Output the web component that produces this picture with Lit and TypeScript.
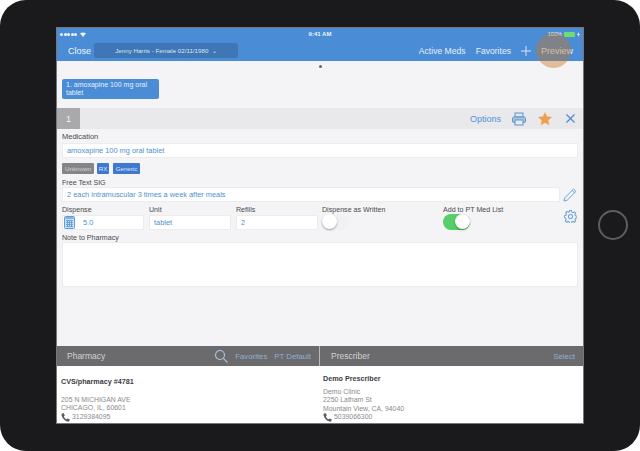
import { LitElement, html, css, svg } from "lit";
import { customElement } from "lit/decorators.js";

const phone = svg`<svg class="phone" viewBox="0 0 12 12" width="9" height="9"><path d="M1.500 .8 L3.800 .4 L5 3.400 L3.800 4.600 C4.600 6.400 5.800 7.800 7.600 8.400 L8.800 7.200 L11.600 8.400 L11.200 10.800 C10.800 11.600 9.600 11.800 8.600 11.400 C4.800 10.200 1.800 7 .8 3.200 C.6 2.200 .9 1.200 1.500 .8Z" fill="#5a5a5c"/></svg>`;

@customElement("app-root")
export class AppRoot extends LitElement {
  static styles = css`
    :host { display: block; width: 640px; height: 451px; background: #fff; overflow: hidden; font-family: "Liberation Sans", Arial, sans-serif; }
    .device { position: relative; box-sizing: border-box; width: 640px; height: 451px; background: #1a191b; border-radius: 26px; padding: 27px 56px; }
    .screen { position: relative; box-sizing: border-box; height: 397px; background: #f4f3f6; border: 1px solid #77777a; display: flex; flex-direction: column; overflow: hidden; }
    .home { position: absolute; left: 598px; top: 210px; width: 30px; height: 30px; box-sizing: border-box; border: 2px solid #5e5e60; border-radius: 50%; }
    .head { background: #4a8cd6; height: 33px; flex: none; color: #f1f6fc; }
    .status { height: 12px; display: grid; grid-template-columns: 1fr auto 1fr; align-items: center; padding: 0 3px; font-size: 5.6px; color: #eef4fb; }
    .status .time { font-size: 6px; font-weight: 700; }
    .dots { display: flex; align-items: center; gap: .6px; }
    .dots i { width: 3px; height: 3px; background: #f1f6fc; border-radius: 50%; }
    .dots svg { margin-left: 2px; }
    .batt { display: flex; align-items: center; justify-content: flex-end; gap: 2px; }
    .battbar { width: 11px; height: 5px; background: #6fdc70; border-radius: 1px; }
    .nav { height: 21px; display: flex; align-items: center; font-size: 9px; padding: 0 10px 0 11px; }
    .close { width: 26px; }
    .pt { width: 144px; height: 15px; background: #3f76b5; border-radius: 2px; display: flex; align-items: center; justify-content: center; font-size: 6.2px; color: #dbe6f3; }
    .navr { margin-left: auto; display: flex; align-items: center; gap: 10px; font-size: 8.6px; color: #e7eff9; }
    .plus { width: 10px; height: 10px; }
    .preview { font-size: 9px; }
    .touch { position: absolute; left: 479px; top: 5px; width: 35px; height: 35px; border-radius: 50%; background: rgba(197, 120, 35, .43); }
    .body { flex: 1; display: flex; flex-direction: column; }
    .pager { height: 18px; display: flex; justify-content: center; align-items: center; flex: none; }
    .pager i { width: 3px; height: 3px; background: #666; border-radius: 50%; margin-bottom: 8px; }
    .chipwrap { padding: 0 5px; height: 29px; flex: none; }
    .chip { width: 97px; height: 20px; box-sizing: border-box; background: #4a8cd6; border-radius: 2px; padding: 2px 4px; color: #e8f0fa; font-size: 7px; line-height: 8px; }
    .bar { height: 21px; flex: none; background: #e9e8eb; display: flex; align-items: center; padding-right: 8px; }
    .num { width: 23px; height: 21px; background: #a9a9ab; color: #f4f4f4; font-size: 9px; display: flex; align-items: center; justify-content: center; }
    .opts { margin-left: auto; display: flex; align-items: center; color: #4d94d8; font-size: 9px; }
    .opts svg { display: block; }
    .form { padding: 0 5px; display: flex; flex-direction: column; flex: none; }
    .lbl { font-size: 7.1px; color: #4a4a4c; line-height: 8px; white-space: nowrap; }
    .in { box-sizing: border-box; height: 15px; background: #fff; border: 1px solid #ececee; display: flex; align-items: center; padding-left: 4px; color: #4f8fd0; font-size: 7.4px; }
    .badges { display: flex; gap: 3px; margin: 5px 0; }
    .b { height: 11px; border-radius: 1px; display: flex; align-items: center; justify-content: center; color: #dfe8f4; font-size: 6.2px; background: #3f78d0; }
    .b.g { background: #858587; color: #d7d7d7; width: 32px; }
    .b.rx { width: 12px; }
    .b.gen { width: 27px; margin-left: 1px; }
    .sigrow { display: flex; align-items: center; gap: 3px; }
    .sigrow .in { flex: 1; }
    .sigrow svg { margin-right: 1px; }
    .grid { display: grid; grid-template-columns: 87px 87px 86px 121px 121px 1fr; margin-top: 4px; align-items: start; }
    .cell { display: flex; flex-direction: column; }
    .cell .in { width: 82px; margin-top: 1px; }
    .calc { display: flex; align-items: center; width: 82px; height: 15px; margin-top: 1px; background: #fff; border: 1px solid #ececee; box-sizing: border-box; color: #4f8fd0; font-size: 7.4px; }
    .calc svg { margin: 0 8px 0 1px; }
    .sw { width: 27px; height: 16px; border-radius: 8px; background: #f1f0f3; position: relative; }
    .sw::after { content: ""; position: absolute; left: 0; top: 0; width: 15px; height: 15px; background: #fff; border-radius: 50%; box-shadow: 0 1px 2px rgba(0,0,0,.35); }
    .sw.on { background: #55cf68; }
    .sw.on::after { left: 12px; }
    .note { height: 45px; background: #fff; border: 1px solid #ececee; box-sizing: border-box; }
    .gear { justify-self: end; margin: 4px 2px 0 0; }
    .foot { margin-top: auto; flex: none; display: grid; grid-template-columns: 262px 1fr; }
    .fh { height: 20px; background: #6b6a6c; display: flex; align-items: center; padding: 0 8px 0 10px; color: #d3d3d5; font-size: 8.5px; }
    .fh.r { border-left: 1px solid #b9b9bb; padding-left: 11px; }
    .fh .sp { margin-left: auto; display: flex; align-items: center; gap: 7px; color: #8fb1d4; font-size: 7.8px; }
    .fb { background: #fff; height: 57px; box-sizing: border-box; font-size: 6.9px; line-height: 8.2px; color: #8a8a8c; }
    .fb.l { padding: 12px 0 0 4px; }
    .fb.rr { padding: 9px 0 0 4px; }
    .fb b { display: block; color: #3c3c3e; font-size: 7.2px; }
    .fb.l b { margin-bottom: 10px; }
    .fb.rr b { margin-bottom: 5px; }
    .tel { display: flex; align-items: center; gap: 2px; }
  `;

  render() {
    return html`<div class="device">
      <div class="screen">
        <div class="head">
          <div class="status">
            <div class="dots"><i></i><i></i><i></i><i></i><i></i>
              <svg width="6" height="5" viewBox="0 0 6 5"><path d="M0 1.500C1.700 0 4.300 0 6 1.500L3 5Z" fill="#eef4fb"/></svg>
            </div>
            <span class="time">9:41 AM</span>
            <div class="batt"><span>100%</span><span class="battbar"></span><svg width="3" height="5" viewBox="0 0 3 5"><path d="M2 0L0 3H1.200L1 5L3 2H1.800Z" fill="#eef4fb"/></svg></div>
          </div>
          <div class="nav">
            <span class="close">Close</span>
            <div class="pt">Jenny Harris - Female 02/11/1980 &nbsp;⌄</div>
            <div class="navr">
              <span>Active Meds</span><span>Favorites</span>
              <svg class="plus" viewBox="0 0 10 10"><path d="M5 0V10M0 5H10" stroke="#e7eff9" stroke-width=".9"/></svg>
              <span class="preview">Preview</span>
            </div>
          </div>
        </div>
        <div class="body">
          <div class="pager"><i></i></div>
          <div class="chipwrap"><div class="chip">1. amoxapine 100 mg oral tablet</div></div>
          <div class="bar">
            <div class="num">1</div>
            <div class="opts">
              <span>Options</span>
              <svg style="margin-left:11px" width="14" height="14" viewBox="0 0 14 14" fill="none" stroke="#5f93c8" stroke-width="1"><rect x="3" y="1" width="8" height="4" fill="#dbe6f2"/><rect x=".5" y="5" width="13" height="5.500" rx="1.500" fill="#a9c6e4"/><rect x="3" y="8" width="8" height="5" fill="#e4eef8"/></svg>
              <svg style="margin-left:12px" width="14" height="14" viewBox="0 0 14 14"><path d="M7 0l2.100 4.400 4.900.6-3.600 3.300.9 4.900L7 10.800 2.700 13.200l.9-4.900L0 5l4.900-.6z" fill="#ee9f50"/></svg>
              <svg style="margin-left:14px" width="9" height="9" viewBox="0 0 9 9"><path d="M.5 .5l8 8M8.500 .5l-8 8" stroke="#4d8fd3" stroke-width="1.300"/></svg>
            </div>
          </div>
          <div class="form">
            <div class="lbl" style="margin-top:4px;font-size:7.500px">Medication</div>
            <div class="in" style="margin-top:2px">amoxapine 100 mg oral tablet</div>
            <div class="badges"><span class="b g">Unknown</span><span class="b rx">RX</span><span class="b gen">Generic</span></div>
            <div class="lbl">Free Text SIG</div>
            <div class="sigrow">
              <div class="in">2 each intramuscular 3 times a week after meals</div>
              <svg width="14" height="14" viewBox="0 0 14 14" fill="none" stroke="#5f9ad6" stroke-width=".9"><path d="M1 13l.8-3.200L10.500 1l2.500 2.400L4.200 12.200zM9.200 2.400l2.400 2.400"/></svg>
            </div>
            <div class="grid">
              <div class="cell"><span class="lbl">Dispense</span>
                <div class="calc"><svg width="11" height="13" viewBox="0 0 11 13"><rect x=".5" y=".5" width="10" height="12" rx="1" fill="#cfe2f5" stroke="#5b9be0"/><path d="M1.500 2h8" stroke="#4b8fd8" stroke-width="1.200"/><path d="M2 4.500h7M2 6.500h7M2 8.500h7M2 10.500h7M3.500 4v7M5.500 4v7M7.500 4v7" stroke="#4b8fd8" stroke-width=".7"/></svg>5.0</div></div>
              <div class="cell"><span class="lbl">Unit</span><div class="in">tablet</div></div>
              <div class="cell"><span class="lbl">Refills</span><div class="in">2</div></div>
              <div class="cell"><span class="lbl">Dispense as Written</span><div class="sw"></div></div>
              <div class="cell"><span class="lbl">Add to PT Med List</span><div class="sw on"></div></div>
              <svg class="gear" width="13" height="13" viewBox="0 0 14 14" fill="none" stroke="#6aa3dc" stroke-width="1.100"><circle cx="7" cy="7" r="2.200"/><path d="M6 .6h2l.4 1.700 1.300.6 1.500-.9 1.400 1.400-.9 1.500.6 1.300 1.700.4v2l-1.700.4-.6 1.300.9 1.500-1.400 1.400-1.500-.9-1.300.6-.4 1.700H6l-.4-1.700-1.300-.6-1.500.9-1.400-1.400.9-1.500-.6-1.300L.4 8V6l1.700-.4.600-1.300-.9-1.500L3.200 1.400l1.500.9 1.300-.6z"/></svg>
            </div>
            <div class="lbl" style="margin-top:4px">Note to Pharmacy</div>
            <div class="note"></div>
          </div>
          <div class="foot">
            <div class="fh"><span>Pharmacy</span>
              <div class="sp">
                <svg width="14" height="14" viewBox="0 0 14 14" fill="none" stroke="#a9c6e2" stroke-width="1.100"><circle cx="6" cy="6" r="4.500"/><path d="M9.300 9.300L13.500 13.500"/></svg>
                <span>Favorites</span><span>PT Default</span>
              </div>
            </div>
            <div class="fh r"><span>Prescriber</span><div class="sp"><span>Select</span></div></div>
            <div class="fb l"><b>CVS/pharmacy #4781</b>205 N MICHIGAN AVE<br>CHICAGO, IL, 60601<div class="tel">${phone}<span>3129384095</span></div></div>
            <div class="fb rr"><b>Demo Prescriber</b>Demo Clinic<br>2250 Latham St<br>Mountain View, CA, 94040<div class="tel">${phone}<span>5039066300</span></div></div>
          </div>
        </div>
        <div class="touch"></div>
      </div>
      <div class="home"></div>
    </div>`;
  }
}
